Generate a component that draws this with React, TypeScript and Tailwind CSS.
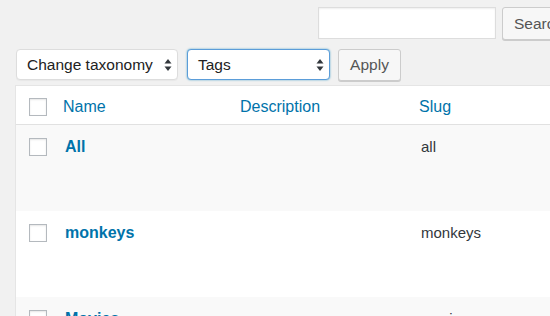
import React from 'react'

const font = { fontFamily: '"Liberation Sans", Arial, sans-serif' }

function Arrows() {
  return (
    <svg width="8" height="14" viewBox="0 0 8 14" className="shrink-0">
      <path d="M4 1 L7.5 5.5 L0.5 5.5 Z" fill="#32373c" />
      <path d="M4 13 L7.5 8.5 L0.5 8.5 Z" fill="#32373c" />
    </svg>
  )
}

function Checkbox() {
  return <div className="w-[18px] h-[18px] shrink-0 bg-white border border-[#b4b9be] shadow-[inset_0_1px_2px_rgba(0,0,0,0.1)]" />
}

type Term = { name: string; slug: string }

const terms: Term[] = [
  { name: 'All', slug: 'all' },
  { name: 'monkeys', slug: 'monkeys' },
  { name: 'Movies', slug: 'movies' },
]

export default function App() {
  return (
    <div className="w-[550px] h-[316px] overflow-hidden bg-[#f1f1f1] text-[#32373c]" style={font}>
      {/* Search */}
      <div className="flex pt-[7px] pl-[318px] gap-[6px]">
        <div className="w-[178px] h-[32px] shrink-0 bg-white border border-[#ddd] shadow-[inset_0_1px_2px_rgba(0,0,0,0.07)]" />
        <button className="h-[33px] w-[90px] shrink-0 rounded-[3px] border border-[#ccc] bg-[#f7f7f7] shadow-[0_1px_0_#ccc] text-[15.5px] text-[#555] text-left pl-[11px]">
          Search
        </button>
      </div>

      {/* Bulk actions */}
      <div className="flex mt-[9px] pl-[16px] items-start">
        <div className="w-[162px] h-[31px] flex items-center justify-between pl-[10px] pr-[5px] bg-white border border-[#ddd] rounded-[4px] shadow-[0_1px_1px_rgba(0,0,0,0.04)] text-[15.5px] text-[#222]">
          <span>Change taxonomy</span>
          <Arrows />
        </div>
        <div className="ml-[9px] w-[143px] h-[31px] flex items-center justify-between pl-[10px] pr-[5px] bg-white border border-[#5b9dd9] rounded-[4px] shadow-[0_0_2px_rgba(30,140,190,0.8)] text-[15.5px] text-[#222]">
          <span>Tags</span>
          <Arrows />
        </div>
        <button className="ml-[8px] w-[63px] h-[32px] rounded-[3px] border border-[#ccc] bg-[#f7f7f7] shadow-[0_1px_0_#ccc] text-[15.5px] text-[#555]">
          Apply
        </button>
      </div>

      {/* Table */}
      <div className="mt-[4px] ml-[15px] border-l border-t border-[#e5e5e5] bg-white">
        <div className="flex items-start h-[39px] border-b border-[#e1e1e1] pl-[13px] pt-[12px] text-[16px] leading-[18px] text-[#0073aa]">
          <Checkbox />
          <span className="ml-[16px] w-[177px]">Name</span>
          <span className="w-[179px]">Description</span>
          <span>Slug</span>
        </div>
        {terms.map((t, i) => (
          <div key={t.slug} className={`flex items-start h-[86px] pl-[13px] pt-[13px] ${i % 2 === 0 ? 'bg-[#f9f9f9]' : 'bg-white'}`}>
            <Checkbox />
            <span className="ml-[18px] w-[177px] text-[16px] font-bold text-[#0073aa] leading-[18px]">{t.name}</span>
            <span className="w-[179px]" />
            <span className="text-[15px] text-[#32373c] leading-[18px]">{t.slug}</span>
          </div>
        ))}
      </div>
    </div>
  )
}
